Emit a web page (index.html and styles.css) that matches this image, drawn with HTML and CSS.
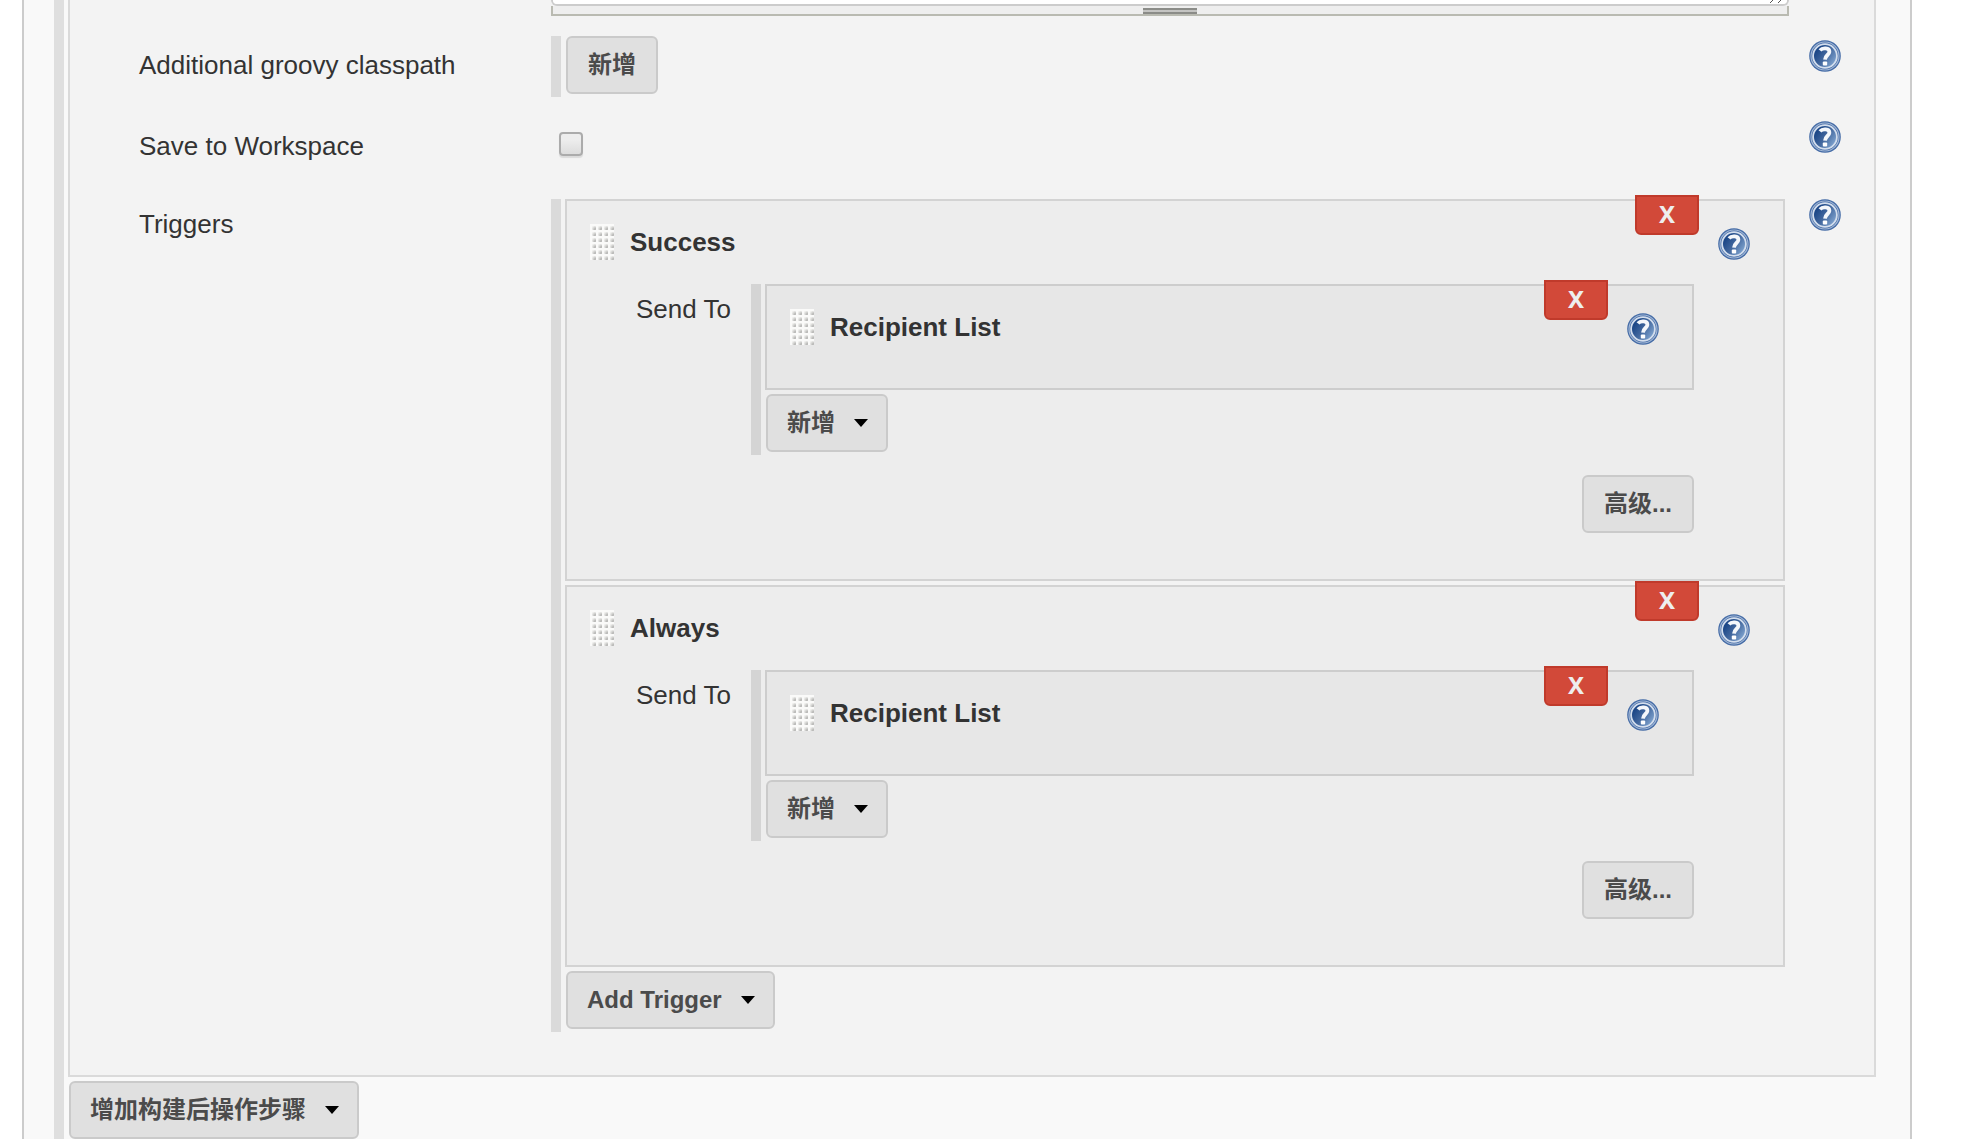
FILE: index.html
```html
<!DOCTYPE html>
<html lang="zh-CN">
  <head>
    <meta charset="UTF-8" />
    <title>Jenkins</title>
    <link rel="stylesheet" href="styles.css">
  </head>
  <body>
    <svg class="defs" width="0" height="0">
      <defs>
        <linearGradient id="helpBlue" x1="0" y1="0.2" x2="1" y2="0.9">
          <stop offset="0.15" stop-color="#1d4888" />
          <stop offset="0.5" stop-color="#44699f" />
          <stop offset="1" stop-color="#8fb3dc" />
        </linearGradient>
        <symbol id="help" viewBox="0 0 32 32">
          <circle cx="16" cy="16" r="15.8" fill="#446ba6" />
          <circle cx="16" cy="16" r="14" fill="none" stroke="#a3b8d6" stroke-width="1.2" />
          <circle cx="16" cy="16" r="11.9" fill="url(#helpBlue)" stroke="#d3deed" stroke-width="1.8" />
          <path d="M11 10.4C13.4 7.4 20.6 7.4 20.4 11.8C20.2 15 16.2 15.2 16 19.6" fill="none" stroke="#f4f7fb" stroke-width="3.8" />
          <rect x="13.8" y="21.4" width="4.4" height="4.2" rx="1" fill="#fff" />
        </symbol>
        <radialGradient id="dotGray" cx="0.9" cy="0.9" r="1">
          <stop offset="0" stop-color="#a8a8a6" />
          <stop offset="0.4" stop-color="#c4c4c2" />
          <stop offset="1" stop-color="#f0f0ee" />
        </radialGradient>
        <pattern id="dots" width="6" height="6" patternUnits="userSpaceOnUse">
          <rect width="6" height="6" fill="#fafaf9" />
          <rect x="2" y="2" width="4" height="4" rx="1" fill="url(#dotGray)" />
        </pattern>
        <symbol id="handle" viewBox="0 0 24 36">
          <rect width="24" height="36" fill="url(#dots)" />
        </symbol>
      </defs>
    </svg>

    <form class="panel">
      <div class="repeated">
        <div class="chunk publisher">
          <div class="script">
            <textarea class="script-input" aria-label="Pre-send Script"></textarea>
            <svg class="grip" viewBox="0 0 12 3"><path d="M0 3L3 0M8 3L11 0" stroke="#555" /></svg>
            <div class="text-handle"></div>
          </div>

          <div class="row">
            <span class="row-name">Additional groovy classpath</span>
            <div class="repeated">
              <button type="button" class="btn">新增</button>
            </div>
            <a href="#" class="help-link" aria-label="Help"><svg class="help"><use href="#help" /></svg></a>
          </div>

          <div class="row check-row">
            <label class="row-name" for="saveOutput">Save to Workspace</label>
            <input type="checkbox" class="check" id="saveOutput" />
            <a href="#" class="help-link" aria-label="Help"><svg class="help"><use href="#help" /></svg></a>
          </div>

          <div class="row">
            <span class="row-name">Triggers</span>
            <div class="repeated triggers">
              <div class="chunk trigger">
                <button type="button" class="delete">X</button>
                <div class="chunk-head">
                  <svg class="handle"><use href="#handle" /></svg>
                  <b>Success</b>
                  <a href="#" class="help-link" aria-label="Help"><svg class="help"><use href="#help" /></svg></a>
                </div>
                <div class="send-to">
                  <span class="send-name">Send To</span>
                  <div class="repeated">
                    <div class="chunk recipient">
                      <button type="button" class="delete">X</button>
                      <div class="chunk-head">
                        <svg class="handle"><use href="#handle" /></svg>
                        <b>Recipient List</b>
                        <a href="#" class="help-link" aria-label="Help"><svg class="help"><use href="#help" /></svg></a>
                      </div>
                    </div>
                    <button type="button" class="btn menu">新增</button>
                  </div>
                </div>
                <div class="advanced">
                  <button type="button" class="btn">高级...</button>
                </div>
              </div>

              <div class="chunk trigger">
                <button type="button" class="delete">X</button>
                <div class="chunk-head">
                  <svg class="handle"><use href="#handle" /></svg>
                  <b>Always</b>
                  <a href="#" class="help-link" aria-label="Help"><svg class="help"><use href="#help" /></svg></a>
                </div>
                <div class="send-to">
                  <span class="send-name">Send To</span>
                  <div class="repeated">
                    <div class="chunk recipient">
                      <button type="button" class="delete">X</button>
                      <div class="chunk-head">
                        <svg class="handle"><use href="#handle" /></svg>
                        <b>Recipient List</b>
                        <a href="#" class="help-link" aria-label="Help"><svg class="help"><use href="#help" /></svg></a>
                      </div>
                    </div>
                    <button type="button" class="btn menu">新增</button>
                  </div>
                </div>
                <div class="advanced">
                  <button type="button" class="btn">高级...</button>
                </div>
              </div>

              <button type="button" class="btn menu">Add Trigger</button>
            </div>
            <a href="#" class="help-link" aria-label="Help"><svg class="help"><use href="#help" /></svg></a>
          </div>
        </div>
        <button type="button" class="btn menu last">增加构建后操作步骤</button>
      </div>
    </form>
  </body>
</html>
```

FILE: styles.css
```css
* {
  box-sizing: border-box;
}

body {
  margin: 0;
  background-color: #fff;
  color: #333;
  font-family: "Liberation Sans", Arial, "Noto Sans CJK SC", sans-serif;
  font-size: 26px;
  line-height: 30px;
}

.defs {
  position: absolute;
}

.panel {
  margin: 0 67px 0 22px;
  padding: 0 34px 0 30px;
  border: solid #ccc;
  border-width: 0 2px;
  background-color: #f9f9f9;
}

/* list of chunks with the thick bar on its left */
.repeated {
  min-width: 0;
  padding-left: 4px;
  border-left: 10px solid rgba(0, 0, 0, 0.1);
}

.chunk {
  position: relative;
  margin-bottom: 4px;
  border: 2px solid #d3d3d3;
}

.publisher {
  padding: 0 33px 43px 69px;
  border-color: #dadada;
  border-top: none;
  background-color: #f3f3f3;
}

.trigger {
  padding: 23px 33px 43px 23px;
  background-color: #ededed;
}

.recipient {
  padding: 23px 33px 43px 23px;
  border-color: #cdcdcd;
  background-color: #e7e7e7;
}

/* script box */
.script {
  position: relative;
  margin: 0 52px 20px 412px;
}

.script-input {
  display: block;
  width: 100%;
  height: 6px;
  padding: 0;
  border: 2px solid #ccc;
  border-top: none;
  border-radius: 0 0 6px 6px;
  background-color: #fff;
  resize: none;
}

.grip {
  position: absolute;
  top: 0;
  right: 7px;
  width: 12px;
  height: 3px;
}

.text-handle {
  height: 10px;
  border: 2px solid #b9bab1;
  border-top: none;
  background: linear-gradient(#8b8c88 0 2px, #c4c4c2 2px 4px, #8b8c88 4px 6px) center 2px / 54px 6px no-repeat #eee;
}

/* setting rows */
.row {
  display: grid;
  grid-template-columns: 412px 1fr 32px;
  align-items: start;
  margin-bottom: 20px;
}

.row:last-child {
  margin-bottom: 0;
}

.row > .repeated,
.row > .check {
  margin-right: 24px;
}

.row-name {
  padding-top: 14px;
}

.row .help-link {
  margin-top: 4px;
}

.check-row {
  min-height: 58px;
}

.check {
  appearance: none;
  width: 24px;
  height: 24px;
  margin: 15px 0 0 8px;
  border: 2px solid #ababab;
  border-radius: 4px;
  background: linear-gradient(#ededed 30%, #dcdcdc);
  box-shadow: 0 2px 1px rgba(0, 0, 0, 0.1);
}

.row > .triggers {
  margin-top: 4px;
}

.help-link {
  display: block;
  height: 32px;
}

.help {
  display: block;
  width: 32px;
  height: 32px;
}

.chunk-head {
  display: flex;
  align-items: center;
  height: 36px;
}

.chunk-head .help-link {
  margin-left: auto;
}

.handle {
  width: 24px;
  height: 36px;
  margin-right: 16px;
}

.send-to {
  display: grid;
  grid-template-columns: 115px 1fr;
  margin: 24px 56px 20px 46px;
}

.send-name {
  padding-top: 10px;
}

.advanced {
  display: flex;
  justify-content: flex-end;
  margin-right: 56px;
}

/* buttons */
.btn {
  display: flex;
  align-items: center;
  height: 58px;
  margin: 0 0 3px 1px;
  padding: 0 20px;
  border: 2px solid #cacaca;
  border-radius: 6px;
  background-color: #e0e0e0;
  color: #4b4b4b;
  font-family: inherit;
  font-size: 24px;
  font-weight: bold;
  line-height: 30px;
}

.menu {
  padding: 0 18px 0 19px;
}

.menu::after {
  content: "";
  margin-left: 19px;
  border: solid transparent;
  border-width: 8px 7px 0;
  border-top-color: #000;
}

.last {
  margin-bottom: 0;
}

.delete {
  position: absolute;
  top: -6px;
  right: 84px;
  width: 64px;
  height: 40px;
  padding: 0 0 2px;
  border: 2px solid #c03a2b;
  border-radius: 0 0 6px 6px;
  background-color: #d24939;
  color: #eee;
  font-family: "Noto Sans", "Open Sans", sans-serif;
  font-size: 24px;
  font-weight: 700;
  line-height: 30px;
}
```
